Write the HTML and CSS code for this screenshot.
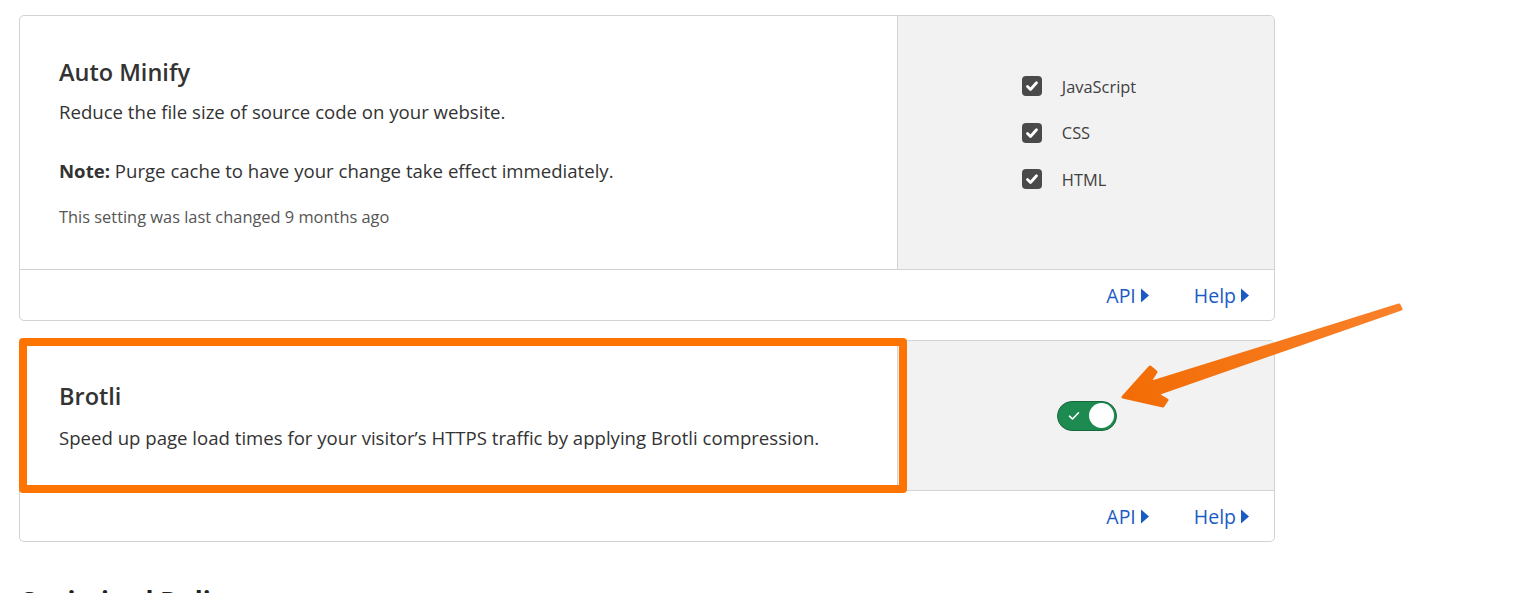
FILE: index.html
```html
<!DOCTYPE html>
<html lang="en">
<head>
<meta charset="utf-8">
<title>Speed settings</title>
<link rel="stylesheet" href="styles.css">
</head>
<body>
<div class="page">
  <section class="card card-minify">
    <div class="card-body">
      <div class="main">
        <h3 class="title">Auto Minify</h3>
        <p class="desc">Reduce the file size of source code on your website.</p>
        <p class="desc note"><strong>Note:</strong> Purge cache to have your change take effect immediately.</p>
        <p class="changed">This setting was last changed 9 months ago</p>
      </div>
      <div class="side side-checks">
        <ul class="checks">
          <li class="check-row"><span class="checkbox"><svg viewBox="0 0 20 20" width="20" height="20"><path d="M5.5 10.5 L8.5 13.5 L14.5 6.8" fill="none" stroke="#fff" stroke-width="2.8" stroke-linecap="round" stroke-linejoin="round"/></svg></span><span class="check-label">JavaScript</span></li>
          <li class="check-row"><span class="checkbox"><svg viewBox="0 0 20 20" width="20" height="20"><path d="M5.5 10.5 L8.5 13.5 L14.5 6.8" fill="none" stroke="#fff" stroke-width="2.8" stroke-linecap="round" stroke-linejoin="round"/></svg></span><span class="check-label">CSS</span></li>
          <li class="check-row"><span class="checkbox"><svg viewBox="0 0 20 20" width="20" height="20"><path d="M5.5 10.5 L8.5 13.5 L14.5 6.8" fill="none" stroke="#fff" stroke-width="2.8" stroke-linecap="round" stroke-linejoin="round"/></svg></span><span class="check-label">HTML</span></li>
        </ul>
      </div>
    </div>
    <div class="card-footer">
      <a class="link" href="#">API<svg class="tri" viewBox="0 0 10 16" width="10" height="17"><path d="M1 1 L9 8 L1 15 Z" fill="#1a5bc4"/></svg></a>
      <a class="link" href="#">Help<svg class="tri" viewBox="0 0 10 16" width="10" height="17"><path d="M1 1 L9 8 L1 15 Z" fill="#1a5bc4"/></svg></a>
    </div>
  </section>

  <section class="card card-brotli">
    <div class="card-body">
      <div class="main">
        <h3 class="title">Brotli</h3>
        <p class="desc">Speed up page load times for your visitor’s HTTPS traffic by applying Brotli compression.</p>
      </div>
      <div class="side side-toggle">
        <span class="toggle">
          <svg class="toggle-check" viewBox="0 0 12 10" width="12" height="10"><path d="M1.5 5.2 L4.5 8 L10.5 1.8" fill="none" stroke="#fff" stroke-width="1.6" stroke-linecap="round" stroke-linejoin="round"/></svg>
          <span class="knob"></span>
        </span>
      </div>
    </div>
    <div class="card-footer">
      <a class="link" href="#">API<svg class="tri" viewBox="0 0 10 16" width="10" height="17"><path d="M1 1 L9 8 L1 15 Z" fill="#1a5bc4"/></svg></a>
      <a class="link" href="#">Help<svg class="tri" viewBox="0 0 10 16" width="10" height="17"><path d="M1 1 L9 8 L1 15 Z" fill="#1a5bc4"/></svg></a>
    </div>
  </section>

  <h2 class="section-heading">Optimized Delivery</h2>

  <div class="highlight"></div>
  <svg class="arrow" viewBox="0 0 1536 593" width="1536" height="593">
    <defs>
      <linearGradient id="ag" x1="1400" y1="307" x2="1122" y2="397" gradientUnits="userSpaceOnUse">
        <stop offset="0" stop-color="#f9812a"/>
        <stop offset="1" stop-color="#f26c04"/>
      </linearGradient>
    </defs>
    <polygon points="1123,397 1150,367 1156,372 1149,383 1399,305 1401,309 1157,394 1167,400 1163,406" fill="url(#ag)" stroke="url(#ag)" stroke-width="3" stroke-linejoin="round"/>
  </svg>
</div>
</body>
</html>
```

FILE: styles.css
```css
* { box-sizing: border-box; }

html, body {
  margin: 0;
  padding: 0;
  background: #fff;
}

body {
  font-family: "Open Sans", "Noto Sans", "Liberation Sans", sans-serif;
  color: #333;
  overflow: hidden;
}

.page {
  position: relative;
  width: 1536px;
  height: 593px;
  padding: 15px 0 0 19px;
}

.card {
  width: 1256px;
  border: 1px solid #d3d3d3;
  border-radius: 5px;
  background: #fff;
  overflow: hidden;
}

.card-minify { margin-bottom: 19px; }

.card-body {
  display: flex;
  border-bottom: 1px solid #d3d3d3;
}

.card-minify .card-body { height: 254px; }
.card-brotli .card-body { height: 150px; }

.main {
  flex: 1;
  padding: 0 39px;
}

.card-minify .main { padding-top: 41px; }
.card-brotli .main { padding-top: 40px; }

.title {
  margin: 0;
  font-size: 23.5px;
  line-height: 30px;
  font-weight: 600;
  color: #333;
}

.desc {
  margin: 12px 0 0;
  font-size: 18.6px;
  line-height: 26px;
  color: #333;
}

.card-brotli .desc { margin-top: 14px; }

.desc.note { margin-top: 33px; }

.desc strong { font-weight: 700; }

.changed {
  margin: 22px 0 0;
  font-size: 16.4px;
  line-height: 22px;
  color: #555;
}

.side {
  width: 377px;
  flex: none;
  background: #f2f2f2;
  border-left: 1px solid #d3d3d3;
  display: flex;
  justify-content: center;
}

.side-checks {
  align-items: flex-start;
  padding-top: 60px;
}

.checks {
  list-style: none;
  margin: 0 0 0 -14px;
  padding: 0;
  display: flex;
  flex-direction: column;
  gap: 26.5px;
}

.check-row {
  display: flex;
  align-items: center;
  height: 20px;
}

.checkbox {
  width: 20px;
  height: 20px;
  border-radius: 4px;
  background: #4a4a4a;
  display: flex;
  flex: none;
}

.check-label {
  margin-left: 20px;
  font-size: 16.4px;
  color: #404040;
}

.side-toggle { align-items: center; }

.toggle {
  position: relative;
  width: 60px;
  height: 30px;
  border-radius: 15px;
  background: #1d8a4f;
  border: 1px solid #15693b;
  display: flex;
  align-items: center;
  justify-content: space-between;
  padding: 0 2px 0 10px;
  margin-left: 1px;
}

.toggle-check { display: block; }

.knob {
  width: 25px;
  height: 25px;
  border-radius: 50%;
  background: #fff;
}

.card-footer {
  height: 50px;
  display: flex;
  justify-content: flex-end;
  align-items: center;
  gap: 44px;
  padding-right: 24px;
}

.link {
  display: flex;
  align-items: center;
  gap: 4px;
  font-size: 19.5px;
  color: #1a5bc4;
  text-decoration: none;
}

.tri { display: block; }

.section-heading {
  margin: 42px 0 0;
  font-size: 26px;
  line-height: 34px;
  font-weight: 700;
  color: #222;
}

.highlight {
  position: absolute;
  left: 19px;
  top: 338px;
  width: 888px;
  height: 155px;
  border: 8px solid #ff7300;
  border-radius: 4px;
  pointer-events: none;
}

.arrow {
  position: absolute;
  left: 0;
  top: 0;
  pointer-events: none;
}
```
